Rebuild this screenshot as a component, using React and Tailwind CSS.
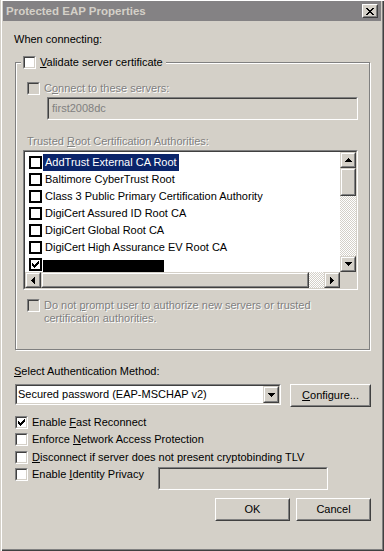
import React from 'react';

const Mark = () => (
  <svg width="7" height="7" viewBox="0 0 7 7" shapeRendering="crispEdges">
    {[2, 3, 4, 3, 2, 1, 0].map((y, x) => (
      <rect key={x} x={x} y={y} width="1" height="3" fill="#000" />
    ))}
  </svg>
);

const Check = ({ checked, disabled }) => (
  <span className="block w-[13px] h-[13px] shrink-0 border border-t-[#808080] border-l-[#808080] border-r-white border-b-white">
    <span
      className={`flex w-full h-full items-center justify-center border border-t-[#404040] border-l-[#404040] border-r-[#d4d0c8] border-b-[#d4d0c8] ${
        disabled ? 'bg-[#d4d0c8]' : 'bg-white'
      }`}
    >
      {checked && <Mark />}
    </span>
  </span>
);

const FlatCheck = ({ checked }) => (
  <span className="flex w-[13px] h-[13px] shrink-0 items-center justify-center border-2 border-black bg-white">
    {checked && <Mark />}
  </span>
);

const Sunken = ({ className = '', inner = '', children }) => (
  <div className={`border border-t-[#808080] border-l-[#808080] border-r-white border-b-white ${className}`}>
    <div className={`h-full w-full border border-t-[#404040] border-l-[#404040] border-r-[#d4d0c8] border-b-[#d4d0c8] ${inner}`}>
      {children}
    </div>
  </div>
);

const Button = ({ className = '', children }) => (
  <div className={`border border-t-white border-l-white border-r-[#404040] border-b-[#404040] ${className}`}>
    <div className="h-full w-full flex items-center justify-center border border-t-[#d4d0c8] border-l-[#d4d0c8] border-r-[#808080] border-b-[#808080]">
      {children}
    </div>
  </div>
);

const ScrollBtn = ({ className = '', children }) => (
  <div className={`shrink-0 bg-[#d4d0c8] border border-t-[#d4d0c8] border-l-[#d4d0c8] border-r-[#404040] border-b-[#404040] ${className}`}>
    <div className="h-full w-full flex items-center justify-center border border-t-white border-l-white border-r-[#808080] border-b-[#808080]">
      {children}
    </div>
  </div>
);

const Arrow = ({ dir }) => {
  const rows = [
    [3, 1],
    [2, 3],
    [1, 5],
    [0, 7],
  ];
  if (dir === 'up' || dir === 'down') {
    return (
      <svg width="7" height="4" viewBox="0 0 7 4" shapeRendering="crispEdges">
        {rows.map(([x, w], i) => (
          <rect key={i} x={x} y={dir === 'up' ? i : 3 - i} width={w} height="1" fill="#000" />
        ))}
      </svg>
    );
  }
  return (
    <svg width="4" height="7" viewBox="0 0 4 7" shapeRendering="crispEdges">
      {rows.map(([y, h], i) => (
        <rect key={i} y={y} x={dir === 'left' ? i : 3 - i} height={h} width="1" fill="#000" />
      ))}
    </svg>
  );
};

const Track = ({ className = '' }) => (
  <div className={`bg-[image:repeating-conic-gradient(#fff_0%_25%,#d4d0c8_0%_50%)] bg-[length:2px_2px] ${className}`} />
);

const dim = 'text-[#808080] [text-shadow:1px_1px_0_#fff]';

const certs = [
  'AddTrust External CA Root',
  'Baltimore CyberTrust Root',
  'Class 3 Public Primary Certification Authority',
  'DigiCert Assured ID Root CA',
  'DigiCert Global Root CA',
  'DigiCert High Assurance EV Root CA',
];

export default function App() {
  return (
    <div className="relative w-[384px] h-[551px] overflow-hidden bg-[#d4d0c8] text-[11px] leading-[13px] text-black font-['Liberation_Sans',Arial,sans-serif] shadow-[inset_1px_0_0_#d4d0c8,inset_2px_0_0_#fff,inset_0_1px_0_#fff,inset_-1px_-1px_0_#404040,inset_-2px_-2px_0_#808080]">
      {/* title bar */}
      <div className="mt-[1px] mx-[3px] h-[20px] bg-[#848284] flex items-center justify-between pl-[3px] pr-[3px]">
        <span className="font-bold text-[11.5px] text-[#d4d0c8]">Protected EAP Properties</span>
        <Button className="w-[16px] h-[14px] bg-[#d4d0c8]">
          <svg width="8" height="7" viewBox="0 0 8 7" shapeRendering="crispEdges">
            {[0, 1, 2, 3, 4, 5, 6].map((i) => (
              <g key={i} fill="#000">
                <rect x={i} y={i} width="2" height="1" />
                <rect x={6 - i} y={i} width="2" height="1" />
              </g>
            ))}
          </svg>
        </Button>
      </div>

      <div className="flex flex-col">
        <div className="mt-[12px] ml-[14px]">When connecting:</div>

        {/* group box */}
        <div className="relative mt-[16px] ml-[15px] w-[355px] h-[288px] border border-[#808080] shadow-[inset_1px_1px_0_#fff,1px_1px_0_#fff] flex flex-col">
          <div className="absolute left-[5px] top-[-7px] h-[13px] flex items-center gap-[4px] px-[2px] bg-[#d4d0c8]">
            <Check />
            <span className="pr-[1px]">
              <u>V</u>alidate server certificate
            </span>
          </div>

          <div className="mt-[19px] ml-[11px] h-[13px] flex items-center gap-[4px]">
            <Check disabled />
            <span className={dim}>
              C<u>o</u>nnect to these servers:
            </span>
          </div>

          <Sunken className="mt-[2px] ml-[31px] w-[311px] h-[23px]" inner="flex items-center pl-[3px] bg-[#d4d0c8]">
            <span className="text-[#808080]">first2008dc</span>
          </Sunken>

          <div className={`mt-[15px] ml-[11px] ${dim}`}>
            Trusted <u>R</u>oot Certification Authorities:
          </div>

          <Sunken className="mt-[2px] ml-[7px] w-[335px] h-[140px]" inner="flex flex-col bg-white overflow-hidden">
            <div className="flex h-[120px]">
              <div className="flex-1 overflow-hidden pt-[2px]">
                {certs.map((c, i) => (
                  <div key={c} className="h-[17px] flex items-center pl-[4px]">
                    <FlatCheck />
                    <span
                      className={`ml-[1px] h-[17px] flex items-center px-[2px] whitespace-nowrap ${
                        i === 0 ? 'bg-[#0a246a] text-white' : ''
                      }`}
                    >
                      {c}
                    </span>
                  </div>
                ))}
                <div className="h-[17px] flex items-center pl-[4px]">
                  <FlatCheck checked />
                  <span className="ml-[1px] mt-[4px] h-[13px] w-[121px] bg-black" />
                </div>
              </div>
              <div className="w-[16px] flex flex-col">
                <ScrollBtn className="h-[16px]">
                  <Arrow dir="up" />
                </ScrollBtn>
                <ScrollBtn className="h-[28px]" />
                <Track className="flex-1" />
                <ScrollBtn className="h-[16px]">
                  <Arrow dir="down" />
                </ScrollBtn>
              </div>
            </div>
            <div className="flex h-[16px]">
              <ScrollBtn className="w-[16px]">
                <Arrow dir="left" />
              </ScrollBtn>
              <ScrollBtn className="w-[268px]" />
              <Track className="flex-1" />
              <ScrollBtn className="w-[16px]">
                <Arrow dir="right" />
              </ScrollBtn>
              <div className="w-[16px] bg-[#d4d0c8]" />
            </div>
          </Sunken>

          <div className="mt-[9px] ml-[11px] flex items-start gap-[4px]">
            <Check disabled />
            <span className={`${dim} whitespace-nowrap`}>
              Do not <u>p</u>rompt user to authorize new servers or trusted
              <br />
              certification authorities.
            </span>
          </div>
        </div>

        <div className="mt-[15px] ml-[14px]">
          <u>S</u>elect Authentication Method:
        </div>

        <div className="mt-[6px] ml-[15px] flex items-start">
          <Sunken className="w-[266px] h-[21px]" inner="flex items-center bg-white">
            <span className="flex-1 pl-[1px] whitespace-nowrap">Secured password (EAP-MSCHAP v2)</span>
            <ScrollBtn className="w-[16px] h-[17px]">
              <Arrow dir="down" />
            </ScrollBtn>
          </Sunken>
          <Button className="ml-[9px] w-[81px] h-[23px]">
            <span>
              <u>C</u>onfigure...
            </span>
          </Button>
        </div>

        <div className="mt-[9px] ml-[15px] h-[13px] flex items-center gap-[4px]">
          <Check checked />
          <span>
            Enable <u>F</u>ast Reconnect
          </span>
        </div>
        <div className="mt-[4px] ml-[15px] h-[13px] flex items-center gap-[4px]">
          <Check />
          <span>
            Enforce <u>N</u>etwork Access Protection
          </span>
        </div>
        <div className="mt-[5px] ml-[15px] h-[13px] flex items-center gap-[4px]">
          <Check />
          <span>
            <u>D</u>isconnect if server does not present cryptobinding TLV
          </span>
        </div>
        <div className="mt-[4px] ml-[15px] flex items-start gap-[4px]">
          <Check />
          <span className="w-[122px]">
            Enable <u>I</u>dentity Privacy
          </span>
          <Sunken className="-mt-[1px] w-[170px] h-[23px]" inner="bg-[#d4d0c8]" />
        </div>

        <div className="mt-[8px] pr-[13px] flex justify-end gap-[6px]">
          <Button className="w-[75px] h-[23px]">OK</Button>
          <Button className="w-[75px] h-[23px]">Cancel</Button>
        </div>
      </div>
    </div>
  );
}
